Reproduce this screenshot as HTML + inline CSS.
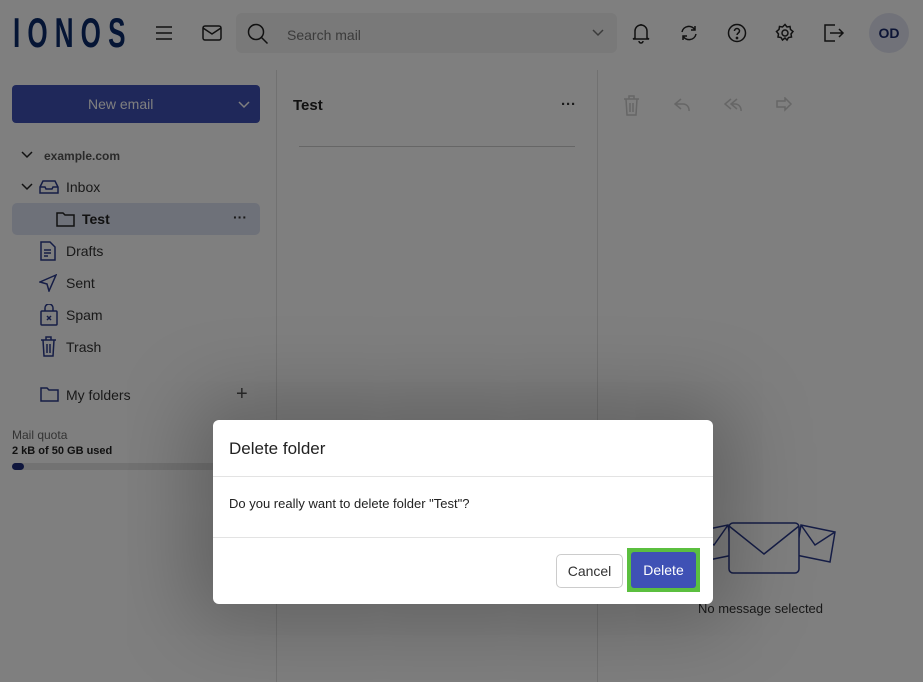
<!DOCTYPE html><html><head><style>
*{box-sizing:border-box}body{margin:0;width:923px;height:682px;overflow:hidden;font-family:"Liberation Sans",sans-serif;background:#fff;position:relative;color:#333}
.a{position:absolute}
svg{fill:none;stroke:#222;stroke-width:1.5}
.nav{font-size:14px;color:#333}
</style></head><body>
<div class="a" style="left:13px;top:13px;font-size:42px;font-weight:bold;color:#0b2a6b;letter-spacing:11.5px;transform:scaleX(.62);transform-origin:left;line-height:40px">IONOS</div>
<svg class="a" style="left:155px;top:25px" width="18" height="16"><path d="M1 2h16M1 8h16M1 14h16"/></svg>
<svg class="a" style="left:202px;top:25px" width="20" height="16"><rect x="1" y="1" width="18" height="14" rx="2"/><path d="M1 3l9 6 9-6"/></svg>
<div class="a" style="left:236px;top:13px;width:381px;height:40px;background:#f2f2f2;border-radius:6px"></div>
<svg class="a" style="left:247px;top:23px" width="22" height="22"><circle cx="9" cy="9" r="7.5"/><path d="M14.5 14.5l6 6"/></svg>
<div class="a" style="left:287px;top:27px;font-size:14px;color:#777">Search mail</div>
<svg class="a" style="left:592px;top:29px;stroke:#777" width="12" height="8"><path d="M1 1l5 5 5-5"/></svg>
<svg class="a" style="left:631px;top:22px" width="20" height="22"><path d="M4 16V9a6 6 0 0112 0v7l2 1H2zM8 19a2 2 0 004 0M10 2v1"/></svg>
<svg class="a" style="left:679px;top:23px" width="20" height="20"><path d="M3 9a7 7 0 0113-2M17 11a7 7 0 01-13 2M16 3v4h-4M4 17v-4h4"/></svg>
<svg class="a" style="left:727px;top:23px" width="20" height="20"><circle cx="10" cy="10" r="8.5"/><path d="M7.5 8a2.5 2.5 0 115 0c0 2-2.5 2-2.5 4"/><circle cx="10" cy="15" r=".6"/></svg>
<svg class="a" style="left:775px;top:23px" width="20" height="20"><circle cx="10" cy="10" r="3"/><path d="M10 1.5l2 2.5 3-.5.5 3 2.5 2-2 2.5.5 3-3 .5-1.5 2.5-2-2-2.5 2-1.5-2.5-3-.5.5-3-2-2.5 2.5-2 .5-3 3 .5z"/></svg>
<svg class="a" style="left:823px;top:24px" width="22" height="18"><path d="M12 1H2v16h10M7 9h13M16 5l4 4-4 4"/></svg>
<div class="a" style="left:869px;top:13px;width:40px;height:40px;border-radius:50%;background:#e2e5f3;color:#1a2a6c;font-weight:bold;font-size:14px;text-align:center;line-height:40px">OD</div>
<div class="a" style="left:276px;top:70px;width:1px;height:612px;background:#e3e3e3"></div>
<div class="a" style="left:597px;top:70px;width:1px;height:612px;background:#e3e3e3"></div>
<div class="a" style="left:12px;top:85px;width:248px;height:38px;background:#3f51b5;border-radius:4px;color:#fff;font-size:14px;line-height:38px;padding-left:76px">New email</div>
<svg class="a" style="left:238px;top:101px;stroke:#fff" width="12" height="8"><path d="M1 1l5 5 5-5"/></svg>
<svg class="a" style="left:21px;top:151px" width="12" height="8"><path d="M1 1l5 5 5-5"/></svg>
<div class="a" style="left:44px;top:149px;font-size:12px;font-weight:bold;color:#555">example.com</div>
<svg class="a" style="left:21px;top:183px" width="12" height="8"><path d="M1 1l5 5 5-5"/></svg>
<svg class="a" style="left:39px;top:180px;stroke:#2b3a8c" width="20" height="14"><path d="M1 7l3-6h12l3 6v6H1zM1 7h5l1 2h6l1-2h5"/></svg>
<div class="a nav" style="left:66px;top:179px">Inbox</div>
<div class="a" style="left:12px;top:203px;width:248px;height:32px;background:#dde2f2;border-radius:5px"></div>
<svg class="a" style="left:56px;top:211px" width="19" height="16"><path d="M1 2h6l2 2h9v11H1z"/></svg>
<div class="a" style="left:82px;top:211px;font-size:14px;font-weight:bold;color:#222">Test</div>
<div class="a" style="left:233px;top:209px;font-size:14px;font-weight:bold">···</div>
<svg class="a" style="left:40px;top:241px;stroke:#2b3a8c" width="16" height="20"><path d="M1 1h9l5 5v13H1zM4 9h7M4 12h7M4 15h4"/></svg>
<div class="a nav" style="left:66px;top:243px">Drafts</div>
<svg class="a" style="left:39px;top:274px;stroke:#2b3a8c" width="18" height="18"><path d="M17 1L1 8l7 2 2 7z"/></svg>
<div class="a nav" style="left:66px;top:275px">Sent</div>
<svg class="a" style="left:40px;top:304px;stroke:#2b3a8c" width="18" height="22"><rect x="1" y="7" width="16" height="14" rx="1"/><path d="M5 7V4a4 4 0 018 0v3M7 12l4 4M11 12l-4 4"/></svg>
<div class="a nav" style="left:66px;top:307px">Spam</div>
<svg class="a" style="left:40px;top:336px;stroke:#2b3a8c" width="17" height="21"><path d="M1 4h15M6 4V1h5v3M3 4l1 16h9l1-16M7 8v9M10 8v9"/></svg>
<div class="a nav" style="left:66px;top:339px">Trash</div>
<svg class="a" style="left:40px;top:386px;stroke:#2b3a8c" width="19" height="16"><path d="M1 2h6l2 2h9v11H1z"/></svg>
<div class="a nav" style="left:66px;top:387px">My folders</div>
<div class="a" style="left:236px;top:383px;font-size:20px;color:#555">+</div>
<div class="a" style="left:12px;top:428px;font-size:12px;color:#666">Mail quota</div>
<div class="a" style="left:12px;top:445px;font-size:11px;font-weight:bold;color:#222">2 kB of 50 GB used</div>
<div class="a" style="left:12px;top:463px;width:248px;height:7px;background:#e4e4e4;border-radius:4px"><div style="width:12px;height:7px;background:#1f2d7a;border-radius:4px"></div></div>
<div class="a" style="left:293px;top:97px;font-size:15px;font-weight:bold;color:#222">Test</div>
<div class="a" style="left:561px;top:96px;font-size:15px;font-weight:bold">···</div>
<div class="a" style="left:299px;top:146px;width:276px;height:1px;background:#ccc"></div>
<svg class="a" style="left:623px;top:95px;stroke:#ccc" width="17" height="21"><path d="M1 4h15M6 4V1h5v3M3 4l1 16h9l1-16M7 8v9M10 8v9"/></svg>
<svg class="a" style="left:673px;top:97px;stroke:#ccc" width="120" height="16"><path d="M8 2L2 7l6 5M2 7h8a6 6 0 016 7M58 2l-6 5 6 5M64 2l-6 5 6 5M58 7h4a6 6 0 016 7M104 4h8V1l6 6-6 6v-3h-8z"/></svg>
<svg class="a" style="left:690px;top:518px;stroke:#2b3a8c" width="150" height="60"><path d="M4 14l34-7 5 30-34 7zM4 14l20 13 14-20M145 14l-34-7-5 30 34 7zM145 14l-20 13-14-20"/><rect x="39" y="5" width="70" height="50" rx="4" fill="#fff"/><path d="M39 8l35 28 35-28"/></svg>
<div class="a" style="left:698px;top:601px;font-size:13px;color:#333">No message selected</div>
<div class="a" style="left:0;top:0;width:923px;height:682px;background:rgba(0,0,0,.5)"></div>
<div class="a" style="left:213px;top:420px;width:500px;height:184px;background:#fff;border-radius:6px;box-shadow:0 0 80px 20px rgba(0,0,0,.25)">
<div style="height:57px;border-bottom:1px solid #e3e3e3;padding:19px 16px;font-size:17px;color:#222">Delete folder</div>
<div style="height:61px;border-bottom:1px solid #e3e3e3;padding:19px 16px;font-size:13px;color:#222">Do you really want to delete folder "Test"?</div>
<div class="a" style="left:343px;top:134px;width:67px;height:34px;border:1px solid #ccc;border-radius:5px;font-size:14px;text-align:center;line-height:32px;color:#333">Cancel</div>
<div class="a" style="left:414px;top:128px;width:73px;height:44px;background:#5bbf3f"><div style="margin:4px;height:36px;background:#3f51b5;border-radius:3px;color:#fff;font-size:14px;text-align:center;line-height:36px">Delete</div></div>
</div>
</body></html>
